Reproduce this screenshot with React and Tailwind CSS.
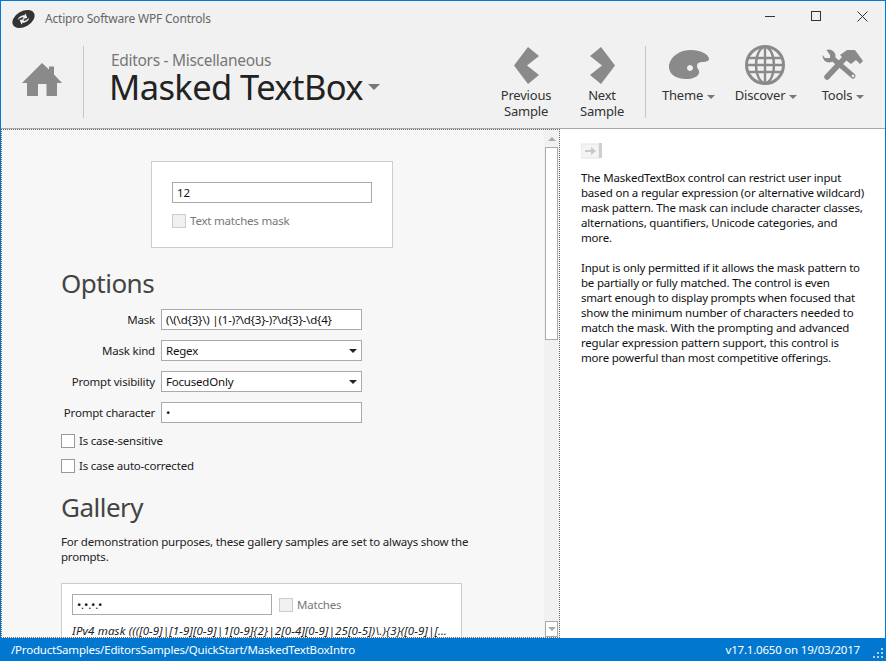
import React from 'react';

const FONT = "font-['Noto_Sans',sans-serif]";

function Caret({ className = 'border-t-[#777]' }) {
  return <span className={`inline-block w-0 h-0 border-x-[4px] border-x-transparent border-t-[4px] ${className}`} />;
}

function Logo() {
  return (
    <svg width="25" height="22" viewBox="0 0 26 22" className="block">
      <ellipse cx="13" cy="11" rx="12.5" ry="8" transform="rotate(-30 13 11)" fill="#333" />
      <path d="M7 12c.5-3 4-5 7-5l1-2 2 5-5 1 1-2c-2 0-4 1.500-6 3z" fill="#f1f1f1" />
      <path d="M19 10c-.5 3-4 5-7 5l-1 2-2-5 5-1-1 2c2 0 4-1.500 6-3z" fill="#f1f1f1" />
    </svg>
  );
}

function Home() {
  return (
    <svg width="40" height="33" viewBox="0 0 40 33" className="block">
      <path fill="#8a8a8a" d="M20 0 L27 6.500 V3.500 H32 V11.500 L40 20 H35 V33 H24.500 V21 H16 V33 H5 V20 H0 Z" />
    </svg>
  );
}

function Palette() {
  return (
    <svg width="42" height="32" viewBox="0 0 42 32" className="block">
      <path
        fill="#8a8a8a"
        fillRule="evenodd"
        d="M1 16C3 7 12 1 23 1c9 0 18 4 18 9 0 2-3 3-6 3-4 0-6 1-6 4 0 3 3 4 2 7-1 4-7 6-13 6C8 30 0 25 1 16zM22 16a3 3 0 1 0 .01 0z"
      />
    </svg>
  );
}

function Globe() {
  return (
    <svg width="40" height="40" viewBox="0 0 40 40" className="block" fill="none" stroke="#8a8a8a" strokeWidth="2.400">
      <circle cx="20" cy="20" r="18.500" strokeWidth="3" />
      <ellipse cx="20" cy="20" rx="9" ry="18" />
      <path d="M20 2v36M3 13h34M2 20h36M3 27h34" />
    </svg>
  );
}

function Tools() {
  return (
    <svg width="42" height="33" viewBox="0 0 42 33" className="block">
      {/* hammer */}
      <path d="M5 28L22 10" stroke="#8a8a8a" strokeWidth="5.500" strokeLinecap="round" />
      <path fill="#8a8a8a" d="M18 6L25 1l8 0 8 11-3 3-4-4-5 4-8-6z" />
      {/* wrench */}
      <path d="M9 8L31 27" stroke="#8a8a8a" strokeWidth="5" strokeLinecap="round" />
      <circle cx="7" cy="7" r="6.500" fill="#8a8a8a" />
      <path fill="#f1f1f1" d="M8 6L3-1-2 3l5 6 5 0z" />
      <circle cx="31" cy="27" r="1.300" fill="#f1f1f1" />
    </svg>
  );
}

function ToolButton({ children, label, width, menu }) {
  return (
    <div className="flex flex-col items-center" style={{ width }}>
      <div className="h-[40px] flex items-center justify-center">{children}</div>
      <div className="mt-[2px] text-[13px] leading-[16px] text-[#333] text-center whitespace-pre-line">
        {label}
        {menu && <span className="ml-[4px] align-middle inline-flex"><Caret /></span>}
      </div>
    </div>
  );
}

function Check({ disabled, label }) {
  return (
    <div className="flex items-center h-[14px]">
      <span className={`w-[14px] h-[14px] border ${disabled ? 'border-[#ccc] bg-[#f0f0f0]' : 'border-[#999] bg-white'}`} />
      <span className={`ml-[4px] ${disabled ? 'text-[#777]' : 'text-[#222]'}`}>{label}</span>
    </div>
  );
}

function Row({ label, children }) {
  return (
    <div className="flex items-center h-[21px]">
      <div className="w-[94px] text-right text-[#222] whitespace-nowrap">{label}</div>
      <div className="ml-[6px]">{children}</div>
    </div>
  );
}

function Field({ value, width = 'w-[201px]' }) {
  return (
    <div className={`${width} h-[21px] border border-[#aaa] bg-white pl-[4px] flex items-center text-[#111] whitespace-nowrap overflow-hidden`}>
      {value}
    </div>
  );
}

function Combo({ value }) {
  return (
    <div className="w-[201px] h-[21px] border border-[#aaa] bg-white pl-[4px] pr-[4px] flex items-center justify-between text-[#111]">
      {value}
      <Caret className="border-t-[#222]" />
    </div>
  );
}

function Scrollbar() {
  return (
    <div className="w-[15px] shrink-0 bg-[#f1f1f1] flex flex-col">
      <div className="h-[17px] mx-[1px] flex items-center justify-center">
        <span className="w-0 h-0 border-x-[4px] border-x-transparent border-b-[4px] border-b-[#aaa]" />
      </div>
      <div className="h-[193px] mx-[1px] bg-white border border-[#aaa]" />
      <div className="flex-1" />
      <div className="h-[16px] mx-[1px] bg-white border border-[#aaa] flex items-center justify-center">
        <Caret className="border-t-[#aaa]" />
      </div>
    </div>
  );
}

export default function App() {
  return (
    <div className={`${FONT} w-[886px] h-[661px] flex flex-col overflow-hidden bg-[#f1f1f1] border-x border-t border-[#0078d7] text-[11.5px] tracking-[-0.2px]`}>
      {/* Title bar */}
      <div className="h-[35px] shrink-0 flex items-center pl-[10px]">
        <Logo />
        <span className="ml-[9px] text-[#666] text-[12px]">Actipro Software WPF Controls</span>
        <div className="ml-auto self-start flex text-[#333]">
          <div className="w-[46px] h-[30px] flex items-center justify-center">
            <span className="w-[10px] h-px bg-[#333]" />
          </div>
          <div className="w-[46px] h-[30px] flex items-center justify-center">
            <span className="w-[10px] h-[10px] border border-[#333]" />
          </div>
          <div className="w-[46px] h-[30px] flex items-center justify-center">
            <svg width="11" height="11" viewBox="0 0 11 11" stroke="#333" fill="none"><path d="M.5.5l10 10M10.500 .5l-10 10" /></svg>
          </div>
        </div>
      </div>

      {/* Ribbon */}
      <div className="h-[93px] shrink-0 flex border-b border-[#aaa]">
        <div className="w-[82px] pt-[27px] pl-[21px] shrink-0"><Home /></div>
        <div className="w-px h-[72px] mt-[10px] bg-[#c6c6c6] shrink-0" />
        <div className="ml-[27px] pt-[14px] w-[300px]">
          <div className="text-[15.5px] leading-[20px] text-[#777] tracking-[-0.3px]">Editors - Miscellaneous</div>
          <div className="flex items-center -ml-[2px]">
            <span className="text-[34.5px] leading-[34px] text-[#222] tracking-[-0.6px]">Masked TextBox</span>
            <span className="ml-[5px] inline-block w-0 h-0 border-x-[6px] border-x-transparent border-t-[6px] border-t-[#777]" />
          </div>
        </div>
        <div className="flex ml-auto pt-[9px] h-full">
          <ToolButton label={'Previous\nSample'} width="76px">
            <svg width="25" height="37" viewBox="0 0 25 37"><path fill="#8a8a8a" d="M14 0l11 9-12 9.500L25 28l-11 9L0 18.500z" /></svg>
          </ToolButton>
          <ToolButton label={'Next\nSample'} width="76px">
            <svg width="25" height="37" viewBox="0 0 25 37"><path fill="#8a8a8a" d="M11 0L0 9l12 9.500L0 28l11 9 14-18.500z" /></svg>
          </ToolButton>
          <div className="w-px h-[72px] mt-[1px] ml-[5px] bg-[#c6c6c6]" />
          <ToolButton label="Theme" width="85px" menu><Palette /></ToolButton>
          <ToolButton label="Discover" width="70px" menu><div className="-mt-[1px] -ml-[2px]"><Globe /></div></ToolButton>
          <ToolButton label="Tools" width="84px" menu><Tools /></ToolButton>
        </div>
      </div>

      {/* Body */}
      <div className="flex-1 min-h-0 flex bg-white">
        <div className="w-[559px] shrink-0 flex border border-dotted border-[#666] bg-[#f7f7f7]">
          <div className="flex-1 min-w-0 overflow-hidden pl-[59px]">
            <div className="mt-[31px] ml-[90px] w-[242px] h-[87px] border border-[#ccc] bg-white pt-[20px] pl-[20px]">
              <Field value="12" width="w-[200px]" />
              <div className="mt-[11px]"><Check disabled label="Text matches mask" /></div>
            </div>

            <h2 className="mt-[15px] text-[26px] leading-[40px] text-[#444] tracking-[-0.5px]">Options</h2>
            <div className="mt-[6px] flex flex-col gap-[10px]">
              <Row label="Mask"><Field value={'(\\(\\d{3}\\) |(1-)?\\d{3}-)?\\d{3}-\\d{4}'} /></Row>
              <Row label="Mask kind"><Combo value="Regex" /></Row>
              <Row label="Prompt visibility"><Combo value="FocusedOnly" /></Row>
              <Row label="Prompt character"><Field value="•" /></Row>
            </div>
            <div className="mt-[11px]"><Check label="Is case-sensitive" /></div>
            <div className="mt-[11px]"><Check label="Is case auto-corrected" /></div>

            <h2 className="mt-[14px] text-[26px] leading-[40px] text-[#444] tracking-[-0.5px]">Gallery</h2>
            <p className="mt-[7px] w-[420px] leading-[15px] text-[#222]">
              For demonstration purposes, these gallery samples are set to always show the prompts.
            </p>
            <div className="mt-[19px] w-[401px] h-[100px] border border-[#ccc] bg-white pt-[10px] pl-[10px]">
              <div className="flex items-center">
                <Field value="•.•.•.•" width="w-[200px]" />
                <div className="ml-[7px]"><Check disabled label="Matches" /></div>
              </div>
              <div className="mt-[7px] w-[380px] truncate italic text-[#222] tracking-[0.15px]">
                {'IPv4 mask ((([0-9]|[1-9][0-9]|1[0-9]{2}|2[0-4][0-9]|25[0-5])\\.){3}([0-9]|[1-9][0-9]|1[0-9]{2})'}
              </div>
            </div>
          </div>
          <Scrollbar />
        </div>

        <div className="flex-1 pl-[21px] pt-[14px] text-[#111] leading-[15px]">
          <svg width="22" height="16" viewBox="0 0 22 16" className="block">
            <rect x="0" y="1" width="18" height="14" fill="#f4f4f4" stroke="#e4e4e4" />
            <path d="M4 7h6V4l5 4-5 4V9H4z" fill="#c8c8c8" />
            <rect x="18" y="0" width="3" height="15" fill="#cfcfcf" />
          </svg>
          <div className="w-[285px]">
            <p className="mt-[11px]">
              The MaskedTextBox control can restrict user input based on a regular expression (or alternative wildcard) mask pattern. The mask can include character classes, alternations, quantifiers, Unicode categories, and more.
            </p>
            <p className="mt-[15px]">
              Input is only permitted if it allows the mask pattern to be partially or fully matched. The control is even<br />
              smart enough to display prompts when focused that<br />
              show the minimum number of characters needed to<br />
              match the mask. With the prompting and advanced<br />
              regular expression pattern support, this control is<br />
              more powerful than most competitive offerings.
            </p>
          </div>
        </div>
      </div>

      {/* Status bar */}
      <div className="h-[23px] shrink-0 -mx-px bg-[#0277cf] text-white flex items-center pl-[11px] pr-[26px] justify-between relative">
        <span>/ProductSamples/EditorsSamples/QuickStart/MaskedTextBoxIntro</span>
        <span>v17.1.0650 on 19/03/2017</span>
        <svg width="10" height="10" viewBox="0 0 10 10" className="absolute right-[3px] bottom-[3px]" fill="#a8d0ee">
          <rect x="8" y="0" width="2" height="2" /><rect x="4" y="4" width="2" height="2" /><rect x="8" y="4" width="2" height="2" />
          <rect x="0" y="8" width="2" height="2" /><rect x="4" y="8" width="2" height="2" /><rect x="8" y="8" width="2" height="2" />
        </svg>
      </div>
    </div>
  );
}
